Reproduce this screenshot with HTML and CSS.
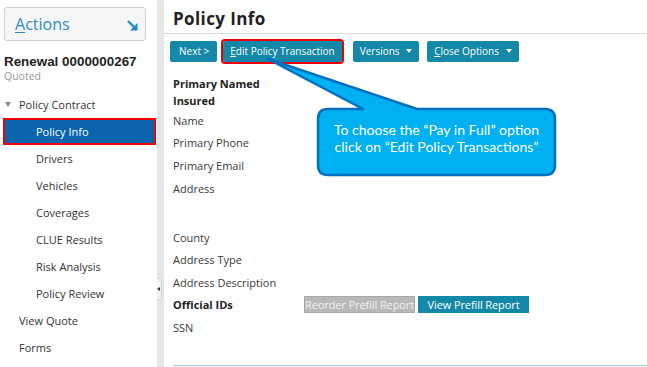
FILE: index.html
```html
<!DOCTYPE html>
<html lang="en">
<head>
    <meta charset="UTF-8">
    <meta name="viewport" content="width=device-width, initial-scale=1.0">
    <title>Policy Info</title>
    <link rel="stylesheet" href="styles.css">
</head>
<body>
    <div class="page">
        <aside class="side">
            <div class="actions">
                <span class="actions-text"><u>A</u>ctions</span>
                <svg class="actions-arrow" width="13" height="13" viewBox="0 0 13 13">
                    <path d="M2 2 L10 10" stroke="#1f8bc6" stroke-width="2.4" fill="none"/>
                    <path d="M4 11.5 L11.5 11.5 L11.5 4 Z" fill="#1f8bc6"/>
                </svg>
            </div>
            <div class="job-title">Renewal 0000000267</div>
            <div class="job-status">Quoted</div>
            <ul class="nav">
                <li class="nav-group"><span class="caret"></span>Policy Contract</li>
                <li class="nav-sub active">Policy Info</li>
                <li class="nav-sub">Drivers</li>
                <li class="nav-sub">Vehicles</li>
                <li class="nav-sub">Coverages</li>
                <li class="nav-sub">CLUE Results</li>
                <li class="nav-sub">Risk Analysis</li>
                <li class="nav-sub">Policy Review</li>
                <li class="nav-top">View Quote</li>
                <li class="nav-top">Forms</li>
            </ul>
        </aside>
        <div class="split">
            <span class="split-tab"></span>
        </div>
        <main class="main">
            <h1 class="title">Policy Info</h1>
            <div class="toolbar">
                <a class="btn btn-next" href="javascript:;">Next &gt;</a>
                <a class="btn btn-marked" href="javascript:;"><u>E</u>dit Policy Transaction</a>
                <a class="btn" href="javascript:;">Versions <span class="drop"></span></a>
                <a class="btn" href="javascript:;"><u>C</u>lose Options <span class="drop"></span></a>
            </div>
            <div class="fields">
                <div class="row row-double"><span class="label strong">Primary Named<br>Insured</span></div>
                <div class="row"><span class="label">Name</span></div>
                <div class="row"><span class="label">Primary Phone</span></div>
                <div class="row"><span class="label">Primary Email</span></div>
                <div class="row"><span class="label">Address</span></div>
                <div class="row-gap"></div>
                <div class="row"><span class="label">County</span></div>
                <div class="row"><span class="label">Address Type</span></div>
                <div class="row"><span class="label">Address Description</span></div>
                <div class="row">
                    <span class="label strong">Official IDs</span>
                    <a class="small-btn disabled" href="javascript:;">Reorder Prefill Report</a>
                    <a class="small-btn" href="javascript:;">View Prefill Report</a>
                </div>
                <div class="row"><span class="label">SSN</span></div>
            </div>
            <div class="bottom-line"></div>

            <div class="callout">
                <svg class="callout-shape" width="300" height="130" viewBox="0 0 300 130">
                    <path d="M68 59 L103 59 L8 9 L157 59 L285 59 Q295 59 295 69 L295 115 Q295 125 285 125 L68 125 Q58 125 58 115 L58 69 Q58 59 68 59 Z"
                          fill="#00b0f0" stroke="#0070c0" stroke-width="2.5" stroke-linejoin="round"/>
                </svg>
                <div class="callout-text">To choose the “Pay in Full” option<br>click on “Edit Policy Transactions”</div>
            </div>
        </main>
    </div>
</body>
</html>
```

FILE: styles.css
```css
body,ul,li,h1{
    margin: 0;
    padding: 0;
}
body{
    font-family: "Open Sans", "Liberation Sans", sans-serif;
    font-size: 11px;
    color: #3a3a3a;
    background: #fff;
}
.page{
    display: flex;
    height: 367px;
    overflow: hidden;
}
.side{
    width: 157px;
    flex: none;
}
.actions{
    margin: 7px 11px 0 4px;
    height: 34px;
    box-sizing: border-box;
    border: 1px solid #cfcfcf;
    border-radius: 3px;
    background: #f6f6f6;
    display: flex;
    align-items: center;
    justify-content: space-between;
    padding: 0 6px 0 10px;
}
.actions-text{
    font-size: 16px;
    color: #2a8dc8;
}
.actions-text u{
    text-decoration-thickness: 1px;
    text-underline-offset: 2px;
}
.actions-arrow{
    margin-top: 3px;
}
.job-title{
    margin: 13px 0 0 4px;
    font-family: "Liberation Sans", Arial, sans-serif;
    font-weight: bold;
    font-size: 13.4px;
    line-height: 15px;
    color: #222;
}
.job-status{
    margin: 1px 0 0 4px;
    font-size: 10.5px;
    line-height: 12px;
    color: #9a9a9a;
}
.nav{
    list-style: none;
    margin-top: 9px;
}
.nav li{
    height: 27px;
    line-height: 23px;
    margin-left: 3px;
    width: 153px;
    box-sizing: border-box;
    border: 2px solid transparent;
    color: #333;
}
.nav-group{
    display: flex;
    align-items: center;
}
.caret{
    width: 0;
    height: 0;
    border-left: 3.5px solid transparent;
    border-right: 3.5px solid transparent;
    border-top: 5px solid #8a8a8a;
    margin-right: 8px;
}
.nav-sub{
    padding-left: 31px;
}
.nav-top{
    padding-left: 14px;
}
.nav li.active{
    background: #0b64ad;
    border-color: #f00000;
    color: #fff;
}
.split{
    width: 7px;
    flex: none;
    background: #e6e6e6;
    display: flex;
    flex-direction: column;
}
.split-tab{
    margin-top: 278px;
    height: 22px;
    width: 5px;
    box-sizing: border-box;
    background: #f1f1f1;
    border: 1px solid #d2d2d2;
    border-left: none;
    border-radius: 0 2px 2px 0;
    position: relative;
}
.split-tab::after{
    content: "";
    position: absolute;
    left: 0;
    top: 8px;
    border-top: 2px solid transparent;
    border-bottom: 2px solid transparent;
    border-right: 3px solid #333;
}
.main{
    flex: 1;
    position: relative;
}
.title{
    height: 34px;
    box-sizing: border-box;
    border-bottom: 1px solid #dcdcdc;
    padding: 3px 0 0 9px;
    font-size: 17px;
    line-height: 31px;
    font-weight: bold;
    color: #222;
    letter-spacing: 0.4px;
}
.toolbar{
    display: flex;
    padding: 7px 0 0 6px;
}
.btn{
    display: inline-block;
    height: 21px;
    line-height: 21px;
    padding: 0 7px;
    border-radius: 2px;
    background: #1388a8;
    color: #fff;
    font-size: 10px;
    text-decoration: none;
    margin-right: 8px;
    white-space: nowrap;
}
.btn-next{
    padding: 0 8px 0 9px;
    margin-right: 7px;
}
.btn u{
    text-decoration-thickness: 1px;
}
.btn-marked{
    margin-left: -1px;
    margin-right: 11px;
    outline: 2px solid #ee0000;
    outline-offset: 0;
}
.drop{
    display: inline-block;
    vertical-align: middle;
    margin: -2px 0 0 4px;
    width: 0;
    height: 0;
    border-left: 3.5px solid transparent;
    border-right: 3.5px solid transparent;
    border-top: 4px solid #fff;
}
.fields{
    padding: 12px 0 0 9px;
}
.row{
    display: flex;
    align-items: center;
    height: 22.6px;
}
.row-double{
    height: 35px;
    line-height: 17px;
}
.row-gap{
    height: 26.5px;
}
.label{
    width: 131px;
    flex: none;
}
.strong{
    font-weight: bold;
    color: #222;
}
.small-btn{
    height: 17px;
    line-height: 17px;
    width: 111px;
    text-align: center;
    background: #1388a8;
    color: #fff;
    text-decoration: none;
    margin-right: 3px;
    white-space: nowrap;
    letter-spacing: -0.1px;
}
.small-btn.disabled{
    background: #b9b9b9;
    color: #efefef;
    box-shadow: inset 0 0 0 1px #a9a9a9;
}
.bottom-line{
    margin: 26px 0 0 9px;
    border-top: 1px solid #a6c6e2;
}
.callout{
    position: absolute;
    left: 96px;
    top: 50px;
    width: 300px;
    height: 130px;
}
.callout-shape{
    display: block;
}
.callout-text{
    position: absolute;
    left: 58px;
    top: 71px;
    width: 237px;
    text-align: center;
    color: #fff;
    font-family: Lato, "Open Sans", sans-serif;
    font-size: 14px;
    line-height: 17px;
}
```
